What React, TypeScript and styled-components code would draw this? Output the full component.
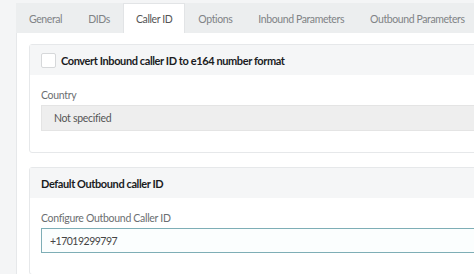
import styled, { createGlobalStyle } from "styled-components"

const tabs = ["General", "DIDs", "Caller ID", "Options", "Inbound Parameters", "Outbound Parameters"]

export default function App() {
  return (
    <>
      <GlobalStyle />
      <Page>
        <TabBar>
          {tabs.map((tab) => (
            <Tab key={tab} $active={tab === "Caller ID"}>
              {tab}
            </Tab>
          ))}
        </TabBar>
        <Panel>
          <Card>
            <CardHeader>
              <Checkbox />
              Convert Inbound caller ID to e164 number format
            </CardHeader>
            <CardBody>
              <Label>Country</Label>
              <Select>Not specified</Select>
            </CardBody>
          </Card>
          <Card>
            <CardHeader>Default Outbound caller ID</CardHeader>
            <CardBody>
              <Label>Configure Outbound Caller ID</Label>
              <Input defaultValue="+17019299797" />
            </CardBody>
          </Card>
        </Panel>
      </Page>
    </>
  )
}

const GlobalStyle = createGlobalStyle`
  * { box-sizing: border-box; }
  body {
    margin: 0;
    background: #f4f5f6;
    font-family: Lato, "Open Sans", sans-serif;
    overflow: hidden;
  }
`

const Page = styled.div`
  width: 760px;
  height: 274px;
  padding: 3px 0 0 16px;
`

const TabBar = styled.nav`
  display: flex;
  height: 30px;
  background: #eceeef;
`

const Tab = styled.div<{ $active?: boolean }>`
  padding: 0 12px;
  line-height: 30px;
  font-size: 10.5px;
  letter-spacing: -0.4px;
  color: ${(p) => (p.$active ? "#555" : "#808386")};
  background: ${(p) => (p.$active ? "#fff" : "transparent")};
  border: 1px solid ${(p) => (p.$active ? "#e2e4e6" : "transparent")};
  border-bottom: none;
`

const Panel = styled.main`
  display: flex;
  flex-direction: column;
  gap: 14px;
  height: 241px;
  padding: 11px 0 0 12px;
  background: #fff;
  border-left: 1px solid #e6e8ea;
`

const Card = styled.section`
  border: 1px solid #e6e8ea;
  border-radius: 3px;
`

const CardHeader = styled.header`
  display: flex;
  align-items: center;
  gap: 5px;
  height: 30px;
  padding-left: 11px;
  background: #f5f6f7;
  font-size: 11px;
  letter-spacing: -0.4px;
  font-weight: 700;
  color: #1a1c1e;
`

const Checkbox = styled.span`
  width: 15px;
  height: 15px;
  background: #fff;
  border: 1px solid #d6d8da;
  border-radius: 2px;
`

const CardBody = styled.div`
  display: flex;
  flex-direction: column;
  padding: 12px 11px 21px;
`

const Label = styled.label`
  font-size: 10.5px;
  letter-spacing: -0.3px;
  line-height: 16px;
  color: #6b6e71;
  margin-bottom: 2px;
`

const Select = styled.div`
  height: 26px;
  padding-left: 12px;
  display: flex;
  align-items: center;
  background: #eeeeee;
  border: 1px solid #e4e4e4;
  font-size: 10.5px;
  letter-spacing: -0.3px;
  color: #555;
`

const Input = styled.input`
  height: 25px;
  padding: 0 8px;
  background: #fbfefe;
  border: 1px solid #7eaeb6;
  font-family: inherit;
  font-size: 10.5px;
  letter-spacing: -0.5px;
  color: #444;
  outline: none;
`
